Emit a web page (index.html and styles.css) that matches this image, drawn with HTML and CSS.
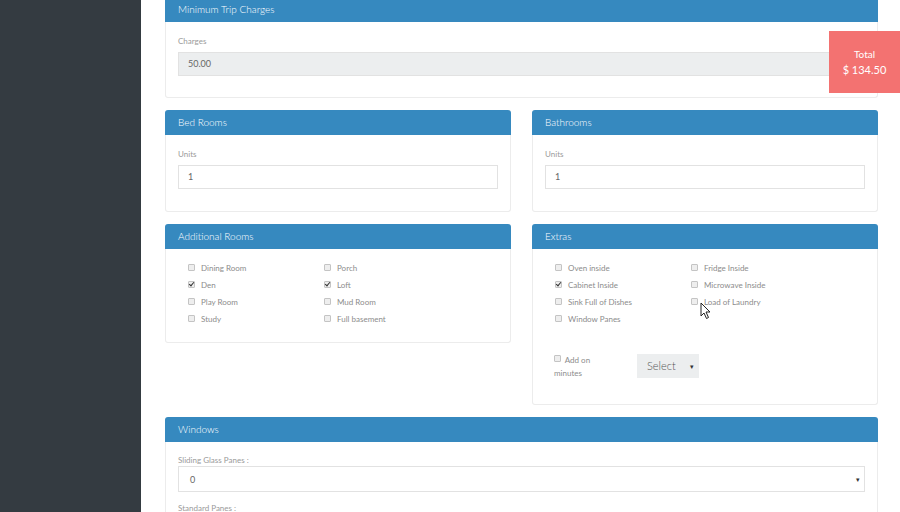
FILE: index.html
```html
<!DOCTYPE html>
<html lang="en">
<head>
  <meta charset="UTF-8">
  <title>Booking</title>
  <link rel="stylesheet" href="styles.css">
</head>
<body>
  <aside class="sidebar"></aside>

  <main class="content">
    <section class="panel panel-top">
      <div class="panel-head">Minimum Trip Charges</div>
      <div class="panel-body">
        <label class="field-label">Charges</label>
        <div class="field field-readonly">50.00</div>
      </div>
    </section>

    <div class="row">
      <section class="panel">
        <div class="panel-head">Bed Rooms</div>
        <div class="panel-body">
          <label class="field-label">Units</label>
          <div class="field">1</div>
        </div>
      </section>
      <section class="panel">
        <div class="panel-head">Bathrooms</div>
        <div class="panel-body">
          <label class="field-label">Units</label>
          <div class="field">1</div>
        </div>
      </section>
    </div>

    <div class="row">
      <section class="panel">
        <div class="panel-head">Additional Rooms</div>
        <div class="panel-body checks-body">
          <div class="checks">
            <label class="check"><input type="checkbox"> Dining Room</label>
            <label class="check"><input type="checkbox"> Porch</label>
            <label class="check"><input type="checkbox" checked> Den</label>
            <label class="check"><input type="checkbox" checked> Loft</label>
            <label class="check"><input type="checkbox"> Play Room</label>
            <label class="check"><input type="checkbox"> Mud Room</label>
            <label class="check"><input type="checkbox"> Study</label>
            <label class="check"><input type="checkbox"> Full basement</label>
          </div>
        </div>
      </section>
      <section class="panel">
        <div class="panel-head">Extras</div>
        <div class="panel-body checks-body extras-body">
          <div class="checks">
            <label class="check"><input type="checkbox"> Oven inside</label>
            <label class="check"><input type="checkbox"> Fridge Inside</label>
            <label class="check"><input type="checkbox" checked> Cabinet Inside</label>
            <label class="check"><input type="checkbox"> Microwave Inside</label>
            <label class="check"><input type="checkbox"> Sink Full of Dishes</label>
            <label class="check"><input type="checkbox"> Load of Laundry</label>
            <label class="check"><input type="checkbox"> Window Panes</label>
          </div>
          <div class="addon">
            <label class="addon-label"><input type="checkbox"> Add on minutes</label>
            <div class="select-btn">Select <span class="caret">&#9662;</span></div>
          </div>
          <svg class="cursor" width="12" height="18" viewBox="0 0 12 18">
            <path d="M1 1 L1 14 L4 11 L6.5 16.5 L8.5 15.5 L6 10 L10 10 Z" fill="#fff" stroke="#222" stroke-width="1"/>
          </svg>
        </div>
      </section>
    </div>

    <section class="panel">
      <div class="panel-head">Windows</div>
      <div class="panel-body windows-body">
        <label class="field-label">Sliding Glass Panes :</label>
        <div class="field field-select">0 <span class="caret">&#9662;</span></div>
        <label class="field-label">Standard Panes :</label>
      </div>
    </section>
  </main>

  <div class="total">
    <div>Total</div>
    <div class="total-amount">$ 134.50</div>
  </div>
</body>
</html>
```

FILE: styles.css
```css
* {
  margin: 0;
  padding: 0;
  box-sizing: border-box;
}

body {
  display: flex;
  height: 512px;
  overflow: hidden;
  font-family: Lato, "Open Sans", sans-serif;
  background-color: #fff;
  color: #777;
}

.sidebar {
  width: 141px;
  flex-shrink: 0;
  background-color: #343b41;
}

.content {
  flex: 1;
  margin-top: -3px;
  padding: 0 22px 0 24px;
  display: flex;
  flex-direction: column;
  gap: 12px;
}

.row {
  display: grid;
  grid-template-columns: 1fr 1fr;
  gap: 21px;
  align-items: start;
}

.panel-head {
  height: 25px;
  line-height: 25px;
  padding-left: 13px;
  background-color: #3689bf;
  color: #fff;
  font-size: 10px;
  font-weight: 300;
  border-radius: 3px 3px 0 0;
}

.panel-body {
  padding: 12px 12px 22px;
  border: 1px solid #ececec;
  border-top: none;
  border-radius: 0 0 3px 3px;
}

.panel-top .panel-body {
  padding-bottom: 21px;
}

.field-label {
  display: block;
  font-size: 8px;
  line-height: 14px;
  margin-bottom: 4px;
  color: #9a9a9a;
}

.field {
  height: 24px;
  line-height: 22px;
  padding-left: 9px;
  border: 1px solid #e2e2e2;
  font-size: 9px;
  color: #666;
}

.field-readonly {
  background-color: #eceeef;
}

.checks-body {
  padding: 10px 12px 15px 22px;
}

.checks {
  display: grid;
  grid-template-columns: 136px 1fr;
}

.check {
  display: flex;
  align-items: center;
  height: 17px;
  font-size: 8px;
  color: #8c8c8c;
}

input[type="checkbox"] {
  appearance: none;
  width: 7px;
  height: 7px;
  margin-right: 6px;
  border: 1px solid #c4c4c4;
  border-radius: 1px;
  background-color: #eeeeee;
  position: relative;
  flex-shrink: 0;
}

input[type="checkbox"]:checked::after {
  content: "";
  position: absolute;
  left: 1px;
  top: -1px;
  width: 2px;
  height: 4px;
  border: solid #333;
  border-width: 0 1px 1px 0;
  transform: rotate(40deg);
}

.extras-body {
  position: relative;
  padding-bottom: 24px;
}

.addon {
  display: flex;
  align-items: flex-start;
  margin-top: 27px;
}

.addon-label {
  width: 83px;
  padding-right: 30px;
  font-size: 8px;
  line-height: 13px;
  color: #8c8c8c;
  margin-left: -1px;
}

.addon-label input {
  margin-right: 2px;
  vertical-align: top;
  margin-top: 1px;
}

.select-btn {
  width: 62px;
  height: 24px;
  line-height: 24px;
  padding-left: 10px;
  background-color: #eceeef;
  font-size: 11px;
  font-weight: 300;
  color: #555;
  position: relative;
}

.caret {
  position: absolute;
  right: 5px;
  top: 0;
  font-size: 7px;
  color: #333;
}

.cursor {
  position: absolute;
  left: 167px;
  top: 53px;
}

.windows-body {
  padding-top: 12px;
}

.windows-body .field-label {
  line-height: 12px;
  margin-bottom: 0;
}

.field-select {
  position: relative;
  height: 26px;
  line-height: 25px;
  padding-left: 11px;
  margin-bottom: 10px;
}

.field-select .caret {
  right: 4px;
}

.total {
  position: absolute;
  top: 31px;
  right: 0;
  width: 71px;
  height: 62px;
  padding-top: 15px;
  background-color: #f37271;
  color: #fff;
  text-align: center;
  font-size: 10px;
  line-height: 16px;
}

.total-amount {
  font-size: 11px;
}
```
